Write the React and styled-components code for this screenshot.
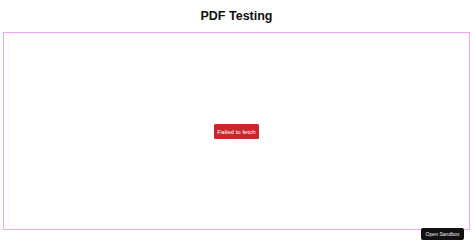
import styled, { createGlobalStyle } from 'styled-components';

const GlobalStyle = createGlobalStyle`
    html, body {
        margin: 0;
        padding: 0;
        background: #ffffff;
        font-family: 'Liberation Sans', Arial, sans-serif;
    }
`;

const Page = styled.div`
    width: 100vw;
    min-height: 100vh;
    padding: 0 4px 0 3px;
    box-sizing: border-box;
    display: flex;
    flex-direction: column;
`;

const Title = styled.h1`
    margin: 0;
    height: 32px;
    line-height: 32px;
    text-align: center;
    font-size: 12.5px;
    font-weight: bold;
    color: #111111;
`;

const Viewer = styled.div`
    height: 198px;
    box-sizing: border-box;
    border: 1px solid #f3a6f3;
    display: flex;
    justify-content: center;
    align-items: center;
`;

const ErrorBadge = styled.div`
    width: 45px;
    height: 15px;
    box-sizing: border-box;
    display: flex;
    justify-content: center;
    align-items: center;
    background: #c8282c;
    color: #ffffff;
    border-radius: 1.5px;
    font-size: 6.1px;
    white-space: nowrap;
`;

const SandboxButton = styled.button`
    position: fixed;
    right: 10px;
    bottom: 8px;
    width: 43px;
    height: 12px;
    padding: 0;
    border: none;
    border-radius: 2px;
    background: #111111;
    color: #f2f2f2;
    font-family: 'Liberation Sans', Arial, sans-serif;
    font-size: 5.1px;
    line-height: 12px;
    white-space: nowrap;
    cursor: pointer;
`;

export default function App() {
    return (
        <>
            <GlobalStyle />
            <Page>
                <Title>PDF Testing</Title>
                <Viewer>
                    <ErrorBadge>Failed to fetch</ErrorBadge>
                </Viewer>
            </Page>
            <SandboxButton>Open Sandbox</SandboxButton>
        </>
    );
}
